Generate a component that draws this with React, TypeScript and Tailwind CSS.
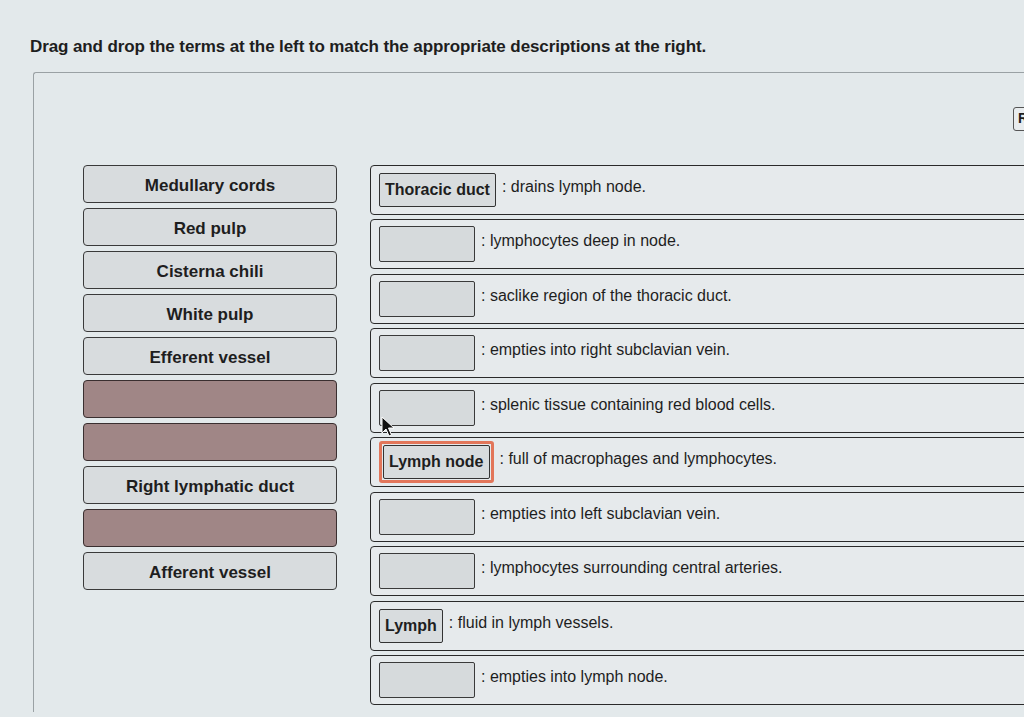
import React from "react";

const terms: { label: string; used?: boolean }[] = [
  { label: "Medullary cords" },
  { label: "Red pulp" },
  { label: "Cisterna chili" },
  { label: "White pulp" },
  { label: "Efferent vessel" },
  { label: "", used: true },
  { label: "", used: true },
  { label: "Right lymphatic duct" },
  { label: "", used: true },
  { label: "Afferent vessel" },
];

const rows: { answer?: string; active?: boolean; text: string }[] = [
  { answer: "Thoracic duct", text: ": drains lymph node." },
  { text: ": lymphocytes deep in node." },
  { text: ": saclike region of the thoracic duct." },
  { text: ": empties into right subclavian vein." },
  { text: ": splenic tissue containing red blood cells." },
  { answer: "Lymph node", active: true, text: ": full of macrophages and lymphocytes." },
  { text: ": empties into left subclavian vein." },
  { text: ": lymphocytes surrounding central arteries." },
  { answer: "Lymph", text: ": fluid in lymph vessels." },
  { text: ": empties into lymph node." },
];

const App = () => {
  return (
    <div
      className="relative w-[1024px] h-[717px] overflow-hidden bg-[#e3e9eb] text-[#1e1e1e]"
      style={{ fontFamily: '"Liberation Sans", Arial, sans-serif' }}
    >
      <h1 className="pl-[30px] pt-[34px] text-[17px] font-bold tracking-[-0.1px]">
        Drag and drop the terms at the left to match the appropriate descriptions at the right.
      </h1>

      <div className="ml-[33px] mt-[12px] w-[1100px] h-[640px] border-l border-t border-[#9aa1a4] rounded-tl-[3px]">
        <div className="flex pl-[979px] pt-[34px]">
          <button className="h-[24px] w-[40px] rounded-[3px] border border-[#555] bg-[#e8ecee] text-left pl-[4px] text-[14px] font-bold">
            Reset
          </button>
        </div>

        <div className="flex gap-[33px] pl-[49px] pt-[34px]">
          <div className="flex w-[254px] flex-col gap-[5px]">
            {terms.map((t, i) => (
              <div
                key={i}
                className={
                  t.used
                    ? "h-[38px] rounded-[4px] border border-[#3a2f30] bg-[#a08686]"
                    : "h-[38px] rounded-[4px] border border-[#3a3a3a] bg-[#d8dcde] pt-[7px] text-center text-[17px] font-bold"
                }
              >
                {t.label}
              </div>
            ))}
          </div>

          <div className="flex w-[700px] flex-col gap-[4.5px]">
            {rows.map((r, i) => (
              <div
                key={i}
                className="flex h-[50px] items-center rounded-[4px] border-[1.5px] border-[#2a2a2a] bg-[#e6eaec] pl-[8px] text-[16px]"
              >
                {r.answer ? (
                  <div
                    className={
                      r.active
                        ? "rounded-[3px] border-[3px] border-[#e2765a] bg-[#e6eaec] p-[1px]"
                        : ""
                    }
                  >
                    <div className="flex h-[34px] items-center rounded-[2px] border border-[#333] bg-[#d8dcde] px-[5px] text-[16px] font-bold">
                      {r.answer}
                    </div>
                  </div>
                ) : (
                  <div className="h-[36px] w-[96px] rounded-[2px] border border-[#3a3a3a] bg-[#d6dadc]" />
                )}
                <span className="ml-[6px] mb-[6px]">{r.text}</span>
              </div>
            ))}
          </div>
        </div>
      </div>

      <svg
        className="absolute left-[381px] top-[416px]"
        width="14"
        height="22"
        viewBox="0 0 14 22"
      >
        <path d="M1 1 L1 17 L5 13 L8 20 L10.5 19 L7.5 12 L13 12 Z" fill="#111" stroke="#fff" strokeWidth="1" />
      </svg>
    </div>
  );
};

export default App;
